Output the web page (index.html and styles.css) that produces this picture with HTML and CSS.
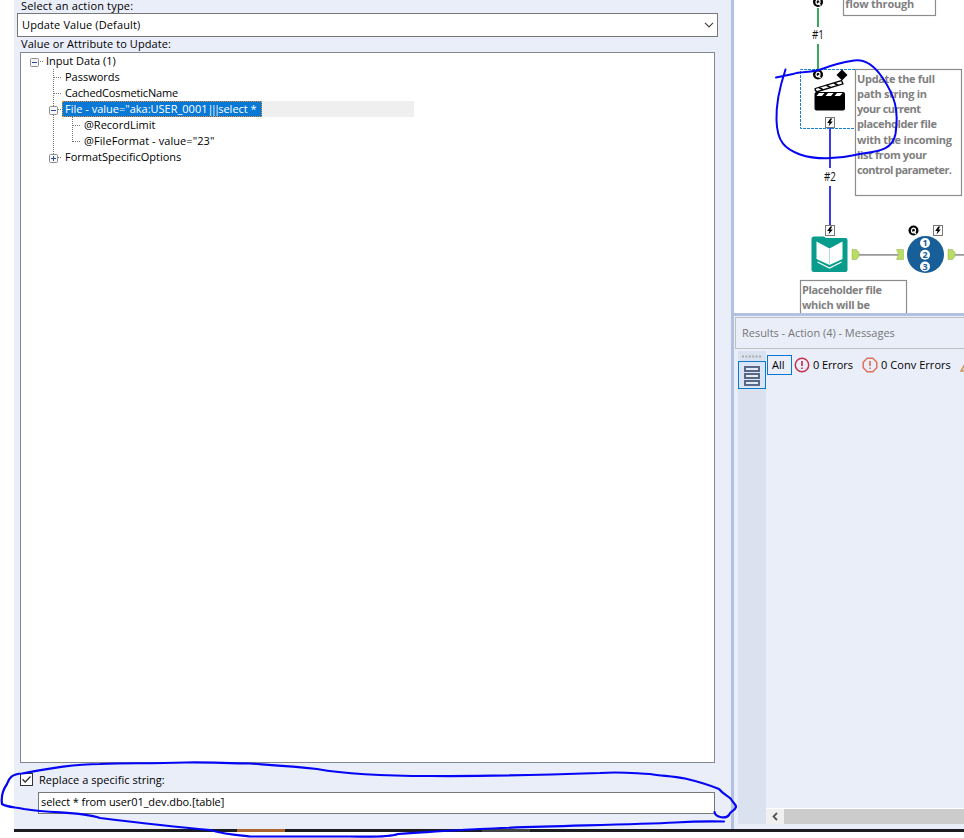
FILE: index.html
```html
<!DOCTYPE html>
<html lang="en">
<head>
<meta charset="utf-8">
<title>Action configuration</title>
<link rel="stylesheet" href="styles.css">
</head>
<body>
<div class="app">
  <main class="workspace">
    <section class="config">
      <div class="label"><span class="t-action">Select an action type:</span></div>
      <div class="select"><span class="t-update">Update Value (Default)</span>
        <svg width="10" height="6" viewBox="0 0 10 6"><path d="M1 .8 5 4.8 9 .8" fill="none" stroke="#444" stroke-width="1.2"/></svg>
      </div>
      <div class="label second"><span class="t-attr">Value or Attribute to Update:</span></div>
      <div class="tree">
        <svg class="branches" width="80" height="120" viewBox="0 0 80 120">
          <g fill="none" stroke="#777" stroke-dasharray="1 1" shape-rendering="crispEdges">
            <path d="M20 9.500H24M33.500 17V105M34 25.500H42M34 41.500H42M38 57.500H42M52.500 65V90M53 73.500H61M53 89.500H61M38 105.500H42"/>
          </g>
          <g fill="#f7f7f7" stroke="#8d8d8d">
            <rect x="10.500" y="6.500" width="8" height="8" rx="1"/><rect x="29.500" y="54.500" width="8" height="8" rx="1"/><rect x="29.500" y="102.500" width="8" height="8" rx="1"/>
          </g>
          <path d="M12 10.500h5M31 58.500h5M31 106.500h5M33.500 104v5" stroke="#2e4a9c"/>
        </svg>
        <div class="row root"><span class="t-input">Input Data (1)</span></div>
        <div class="row child"><span class="t-pass">Passwords</span></div>
        <div class="row child"><span class="t-cached">CachedCosmeticName</span></div>
        <div class="row child selected"><div class="chosen"><span class="t-file">File - value="aka:USER_0001<span class="bars">|||</span>select *</span></div></div>
        <div class="row leaf"><span class="t-record">@RecordLimit</span></div>
        <div class="row leaf"><span class="t-format">@FileFormat - value="23"</span></div>
        <div class="row child"><span class="t-options">FormatSpecificOptions</span></div>
      </div>
      <div class="replace">
        <svg width="13" height="13" viewBox="0 0 13 13"><rect x=".5" y=".5" width="12" height="12" fill="#fff" stroke="#333"/><path d="M2.500 6.200 5.200 9 10.500 3.500" fill="none" stroke="#333" stroke-width="1.300"/></svg>
        <span class="t-replace">Replace a specific string:</span>
      </div>
      <div class="query"><span class="t-query">select * from user01_dev.dbo.[table]</span></div>
    </section>
    <div class="divider"></div>
    <section class="side">
      <svg class="canvas" width="230" height="313" viewBox="734 0 230 313">
        <defs>
          <g id="bolt"><rect x=".5" y=".5" width="9" height="10" fill="#fff" stroke="#777"/><path d="M5.300 1.500 2.200 6H4.500L3.500 9.500 7.800 4.600H5.400L7.300 1.500Z" fill="#000"/></g>
          <g id="quest"><circle r="5" fill="#000"/><ellipse rx="2" ry="2.300" fill="none" stroke="#fff" stroke-width="1.300"/><path d="M0 .8 2.500 3.500" stroke="#fff" stroke-width="1.300"/></g>
        </defs>
        <g fill="#fff" stroke="#8c8c8c" stroke-width="1.200">
          <rect x="843.500" y="-5" width="92" height="20.500"/><rect x="855.500" y="69.500" width="106" height="126"/><rect x="800.500" y="280.500" width="106" height="40"/>
        </g>
        <path d="M818 8V27M818 44V71" stroke="#23a14d" stroke-width="1.800"/>
        <path d="M830 128V168M830 186V226" stroke="#3b3be8" stroke-width="2"/>
        <path d="M858 254.800H898M954 254.800H964" stroke="#999" stroke-width="1.800"/>
        <path d="M855 69.500H800.500V128.500H855" fill="none" stroke="#1683d8" stroke-dasharray="3 1"/>
        <use href="#quest" x="818" y="2"/><use href="#quest" x="818" y="74.500"/><use href="#quest" x="913.500" y="230.500"/>
        <path d="M842 69.500 847.500 75 842 80.500 836.500 75Z"/>
        <rect x="814.500" y="92" width="30.500" height="18.500" rx="2"/>
        <path d="M819 93h5.500l-2.500 3h-5.500ZM828 93h5.500l-2.500 3h-5.500ZM837 93h5.500l-2.500 3h-5.500Z" fill="#fff"/>
        <path d="M815.200 88.500 841.500 80.600 843 83.800 817 91.700Q814.800 91 815.200 88.500Z" fill="#fff" stroke="#000" stroke-width="1.300"/>
        <path d="m819 87.500 4 2.300m3.500-4.600 4 2.300m3.500-4.600 4 2.300" stroke="#000" stroke-width="1.700"/>
        <use href="#bolt" x="825" y="117"/><use href="#bolt" x="825" y="225"/><use href="#bolt" x="933" y="225"/>
        <path d="M814 236.500H824L826 238H845.500Q847.500 238 847.500 240V270Q847.500 272 845.500 272H814Q811.500 272 811.500 270V239Q811.500 236.500 814 236.500Z" fill="#079c8b"/>
        <path d="M816.500 241.500 829.500 248.500 842.500 241.500V259L829.500 265 816.500 259Z" fill="#fff"/>
        <path d="M829.500 248.500V265" stroke="#9fd8d0" stroke-width=".8"/>
        <path d="M817.500 262 829.500 268 841.500 262" stroke="#fff" stroke-width="1.300" fill="none"/>
        <g fill="#b9dc62" stroke="#92b34b" stroke-width=".5"><path d="M852 249.500h4.500l2.500 3v4l-2.500 3H852ZM948 249.500h4.500l2.500 3v4l-2.500 3H948ZM896.500 249.500h7v10h-7l2-5Z"/></g>
        <circle cx="925.500" cy="254.500" r="18.500" fill="#185e99"/>
        <g fill="#fff"><circle cx="925" cy="243" r="5"/><circle cx="925" cy="254.700" r="5"/><circle cx="925" cy="266.500" r="5"/></g>
        <g class="digits"><text x="925" y="246.300">1</text><text x="925" y="258">2</text><text x="925" y="269.800">3</text></g>
        <g class="wires"><text x="812" y="39" textLength="12" lengthAdjust="spacingAndGlyphs">#1</text><text x="824" y="181" textLength="12" lengthAdjust="spacingAndGlyphs">#2</text></g>
        <g class="notes">
          <text x="845" y="8" textLength="69">flow through</text>
          <text x="857" y="83" textLength="78">Update the full</text>
          <text x="857" y="98" textLength="70">path string in</text>
          <text x="857" y="113" textLength="64">your current</text>
          <text x="857" y="128" textLength="80">placeholder file</text>
          <text x="857" y="144" textLength="95">with the incoming</text>
          <text x="857" y="159" textLength="70">list from your</text>
          <text x="857" y="174" textLength="95">control parameter.</text>
          <text x="802" y="294" textLength="80">Placeholder file</text>
          <text x="802" y="309" textLength="68">which will be</text>
        </g>
      </svg>
      <div class="results">
        <div class="heading"><span class="t-results">Results - Action (4) - Messages</span></div>
        <div class="body">
          <div class="rail">
            <svg width="28" height="39" viewBox="0 0 28 39"><path d="M4 5.500H23" stroke="#aaa" stroke-width="2" stroke-dasharray="2 1.400"/><rect x=".5" y="10.500" width="27" height="27" fill="#dbe5f4" stroke="#0878d1"/><g fill="#e5ebf6" stroke="#5a6887" stroke-width="2"><rect x="7" y="16" width="14" height="4"/><rect x="7" y="23" width="14" height="4"/><rect x="7" y="30" width="14" height="4"/></g></svg>
          </div>
          <div class="messages">
            <div class="filters">
              <div class="all"><span class="t-all">All</span></div>
              <svg width="16" height="16" viewBox="0 0 16 16"><circle cx="8" cy="8" r="6.700" fill="none" stroke="#c7324f" stroke-width="1.500"/><path d="M8 4V9M8 10.500V12" stroke="#c7324f" stroke-width="1.700"/></svg>
              <span class="t-errors">0 Errors</span>
              <svg width="16" height="16" viewBox="0 0 16 16"><path d="M5.200 1.200H10.800L14.800 5.200V10.800L10.800 14.800H5.200L1.200 10.800V5.200Z" fill="none" stroke="#df715b" stroke-width="1.500"/><path d="M8 4V9M8 10.500V12" stroke="#df715b" stroke-width="1.700"/></svg>
              <span class="t-conv">0 Conv Errors</span>
              <svg class="warning" width="16" height="16" viewBox="0 0 16 16"><path d="M8 2 15 14H1Z" fill="none" stroke="#c9935a" stroke-width="1.500"/></svg>
            </div>
            <div class="scroll"><div class="arrow"><svg width="6" height="9" viewBox="0 0 6 9"><path d="M5 1 1.500 4.500 5 8" fill="none" stroke="#555" stroke-width="1.800"/></svg></div></div>
          </div>
        </div>
      </div>
    </section>
  </main>
  <footer><div class="accent"></div><div class="muted"></div></footer>
  <svg class="ink" width="964" height="838" viewBox="0 0 964 838">
    <g fill="none" stroke="#0505f5" stroke-width="2" stroke-linecap="round" stroke-linejoin="round">
      <path d="M785.500 69.500C780 86 776 105 776.500 120C777 142 785 149 800 154.500C816 160 838 159 855 155C872 151 892 153 895.500 134C899 110 895 96 882 77C873 64 864 59 854 60.500C838 63 832 65 822 69C812 73 801 71 793 74L776 77.500"/>
      <path d="M714.500 812C716 818 726 819 729 815C730 811 734 812 736 807C736 804 732 802 731 799C727 795 724 795 719 789C707 784 700 782 685 778.500C672 776 662 776 650 774C630 773 620 771.500 600 773C540 775 480 776.500 430 776C390 776 345 774 317 769C292 766 272 765 250 763.500C220 763 205 762 185 762.500C145 764 129 762.500 100 764C72 764 47 769 22 773.500C12 774 9 778 7 784C2 791 1 797 2 804C6 807 14 807 24 809C56 814 79 811 100 818C140 823 175 827 210 830C223 834 235 835 250 836.500H350C370 837 390 837 398 834C430 832 456 830 480 829C540 826 626 825 675 822.500Q700 821 724 821.500" stroke-width="2.200"/>
    </g>
  </svg>
</div>
</body>
</html>
```
FILE: styles.css
```css
*{box-sizing:border-box}
body{margin:0;background:#fff;color:#000;font:11px/16px "Open Sans","Noto Sans",sans-serif}
svg{display:block;flex:none}
.app{position:relative;width:964px;height:838px;overflow:hidden}
.workspace{display:flex;height:829px;padding-left:14px}
.config{display:flex;flex-direction:column;width:717px;background:#eaeef9}
.label{height:13px;padding-left:7px;line-height:12px;white-space:nowrap}
.second{height:15px;line-height:14px}
.select{display:flex;justify-content:space-between;align-items:center;height:24px;margin:0 13px 0 3px;padding:0 3px 0 4px;border:1px solid #777;background:#fff}
.tree{position:relative;height:711px;margin:0 16px 0 6px;border:1px solid #828790;background:#fff}
.branches{position:absolute;left:-1px;top:-1px}
.row{height:16px;line-height:16px;white-space:nowrap}
.root{padding-left:25px}
.child{padding-left:44px}
.leaf{padding-left:63px}
.selected{width:393px;padding-left:41px;background:linear-gradient(to right,#fff 41px,#efefef 41px)}
.chosen{width:200px;height:16px;padding-left:2px;border:1px dotted #f28b2d;background:#0878d7;color:#fff;line-height:14px}
.replace{display:flex;align-items:center;gap:6px;height:28px;padding:5px 0 0 6px}
.query{height:22px;margin:1px 16px 0 24px;padding-left:2px;border:1px solid #777;background:#fff;line-height:18px}
.t-action{letter-spacing:.17px}
.t-update{letter-spacing:.12px}
.t-attr{letter-spacing:.08px}
.t-cached{letter-spacing:-.15px}
.t-file{letter-spacing:0}
.bars{letter-spacing:-2.8px;margin-right:1px}
.t-format{letter-spacing:.08px}
.t-replace{letter-spacing:.04px}
.t-query{letter-spacing:-.09px}
.t-results{letter-spacing:-.02px}
.t-errors{letter-spacing:-.1px}
.divider{width:3px;background:#b1c1e1}
.side{width:230px;overflow:hidden}
.results{height:516px;border-top:3px solid #b1c1e1;background:#eaeef9}
.heading{width:240px;height:32px;margin:1px 0 0 1px;padding-left:6px;border:1px solid #bfc0c4;line-height:30px;color:#777}
.body{display:flex;height:475px;padding:2px 0 0 4px}
.rail{width:28px;height:473px;background:#dbe2ef}
.messages{display:flex;flex-direction:column;justify-content:space-between;width:198px;overflow:hidden}
.filters{display:flex;align-items:center;height:27px;padding-left:1px;white-space:nowrap}
.all{flex:none;width:25px;height:20px;margin-right:2px;padding-left:4px;border:1px solid #0878d7;line-height:18px}
.filters .t-errors{flex:none;width:46px;margin:0 3px}
.filters .t-conv{flex:none;width:76px;margin:0 3px}
.t-conv{letter-spacing:.05px}
.scroll{height:16px;background:#ccc;border-top:1px solid #fff}
.arrow{display:grid;place-items:center;width:18px;height:15px;background:#f0f0f0}
footer{display:flex;height:3px;margin-left:14px;background:#1d1d20}
.accent{width:48px;margin-left:223px;background:#ad642d}
.muted{width:48px;margin-left:197px;background:#444}
.ink{position:absolute;inset:0;pointer-events:none}
.notes{font:bold 11px "Open Sans",sans-serif;fill:#808080}
.wires{font:12px "Open Sans",sans-serif;fill:#111}
.digits{font:bold 9px "Open Sans",sans-serif;fill:#185e99;text-anchor:middle}
```
